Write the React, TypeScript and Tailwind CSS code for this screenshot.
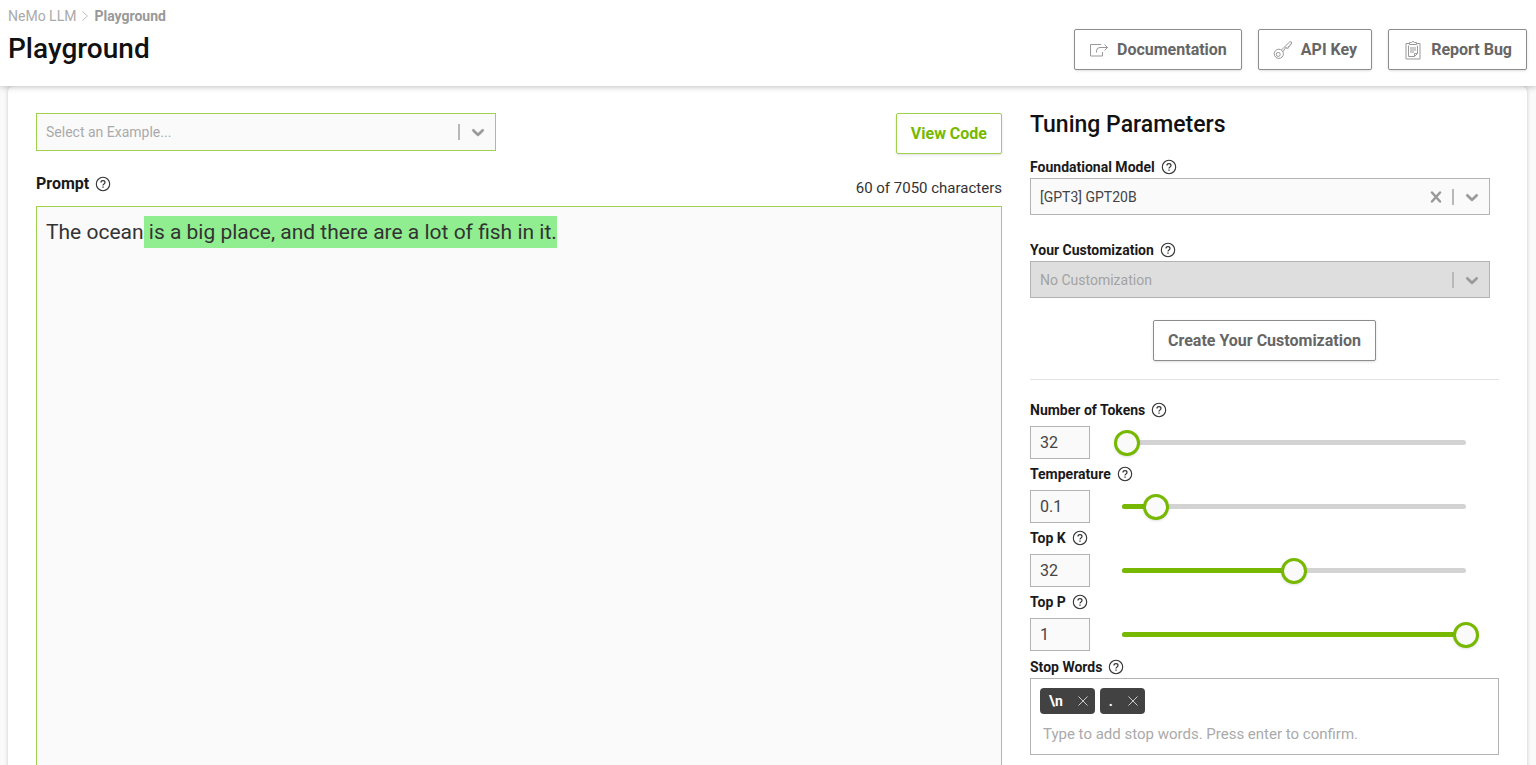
import { useState } from "react"
import type { ReactNode } from "react"

const ShareIcon = () => (
  <svg
    className="h-4 w-5"
    viewBox="0 0 20 16"
    fill="none"
    stroke="currentColor"
    aria-hidden="true"
  >
    <path d="M12 2.500H1.500V14h12v-4" />
    <path d="M7.500 10.500V9q0-3.500 3.500-3.500h8M15.500 2.500l3 3-3 3" />
  </svg>
)

const KeyIcon = () => (
  <svg
    className="h-5 w-5"
    viewBox="0 0 20 20"
    fill="none"
    stroke="currentColor"
    aria-hidden="true"
  >
    <circle cx="5.800" cy="13.800" r="4.600" />
    <circle cx="5.200" cy="14.400" r="2" />
    <path d="M8.200 10.200L16.800 1.800l1.700.2v2l-1.500.5-.2 1.800-1.600.2.2 1.600-2 .2-.3-1.200L9.800 11.800" />
  </svg>
)

const ClipboardIcon = () => (
  <svg
    className="h-5 w-5"
    viewBox="-2 0 20 20"
    fill="none"
    stroke="currentColor"
    aria-hidden="true"
  >
    <path d="M4 3.500H1v15.500h14V3.500h-3" />
    <path d="M4.500 4.500v-2h2q1.500-2.500 3 0h2v2z" />
    <path d="M3.500 5.500v11h6l3-3v-8M9.500 16.500v-3h3" />
    <path d="M5 8h6M5 10h6M5 12h4" />
  </svg>
)

const HelpIcon = () => (
  <svg
    className="h-4 w-4 text-[#333]"
    viewBox="0 0 16 16"
    fill="none"
    stroke="currentColor"
    aria-hidden="true"
  >
    <circle cx="8" cy="8" r="6.700" strokeWidth="1.100" />
    <path
      d="M6 6.500Q6 4.700 8 4.700t2 1.700Q10 7.300 9 7.900 8 8.500 8 9.400"
      strokeWidth="1.200"
    />
    <path d="M8 10.500v1.300" strokeWidth="1.300" />
  </svg>
)

const ChevronIcon = () => (
  <svg
    className="h-5 w-5"
    viewBox="0 0 20 20"
    fill="currentColor"
    stroke="currentColor"
    strokeWidth="0.500"
    aria-hidden="true"
  >
    <path d="M4.516 7.548c0.436-0.446 1.043-0.481 1.576 0l3.908 3.747 3.908-3.747c0.533-0.481 1.141-0.446 1.574 0 0.436 0.445 0.408 1.197 0 1.615-0.406 0.418-4.695 4.502-4.695 4.502-0.217 0.223-0.502 0.335-0.787 0.335s-0.570-0.112-0.789-0.335c0 0-4.287-4.084-4.695-4.502s-0.436-1.170 0-1.615z" />
  </svg>
)

const CrossIcon = () => (
  <svg
    className="h-3 w-3"
    viewBox="0 0 12 12"
    fill="none"
    stroke="currentColor"
    strokeWidth="2.500"
    strokeLinecap="round"
    aria-hidden="true"
  >
    <path d="M2 1.500l8 9M10 1.500l-8 9" />
  </svg>
)

const ThinCrossIcon = () => (
  <svg
    className="h-3 w-3"
    viewBox="0 0 12 12"
    fill="none"
    stroke="currentColor"
    aria-hidden="true"
  >
    <path d="M1.500 1.500l9 9M10.500 1.500l-9 9" />
  </svg>
)

const HeaderButton = ({
  icon,
  children,
}: {
  icon: ReactNode
  children: ReactNode
}) => (
  <button className="flex h-[41px] items-center gap-2 rounded-xs border border-[#8c8c8c] bg-white px-3.5 text-base font-bold text-[#666] shadow">
    <span className="text-[#999]">{icon}</span>
    {children}
  </button>
)

const FieldLabel = ({ id, children }: { id: string; children: string }) => (
  <div className="flex items-center gap-1.5">
    <label htmlFor={id} className="text-sm leading-5 font-bold text-[#1a1a1a]">
      {children}
    </label>
    <HelpIcon />
  </div>
)

interface SelectProps {
  id: string
  option: string
  label?: string
  box: string
  disabled?: boolean
  clearable?: boolean
}

const Select = ({
  id,
  option,
  label,
  box,
  disabled,
  clearable,
}: SelectProps) => (
  <div className="relative w-full max-w-[460px]">
    <select
      id={id}
      aria-label={label}
      disabled={disabled}
      className={`block w-full appearance-none rounded-none border pr-24 pl-[9px] text-sm opacity-100 outline-none ${box}`}
    >
      <option>{option}</option>
    </select>
    <div className="pointer-events-none absolute inset-y-0 right-2 flex items-center gap-2 text-[#999]">
      {clearable && (
        <span className="pr-0.5">
          <CrossIcon />
        </span>
      )}
      <span className="h-4 w-0.5 bg-[#b8b8b8]" />
      <ChevronIcon />
    </div>
  </div>
)

interface SliderFieldProps {
  id: string
  label: string
  initial: number
  max: number
  step: number
}

const SliderField = ({ id, label, initial, max, step }: SliderFieldProps) => {
  const [value, setValue] = useState(initial)

  return (
    <div className="flex flex-col gap-1.5">
      <FieldLabel id={id}>{label}</FieldLabel>
      <div className="flex items-center gap-[19px] pr-5">
        <input
          id={id}
          value={value}
          onChange={(e) => setValue(Number(e.target.value) || 0)}
          className="h-[33px] w-[60px] shrink-0 border border-[#b3b3b3] bg-[#fafafa] px-[9px] text-base text-[#444] outline-none"
        />
        <div className="grid h-[30px] flex-1 items-center">
          <div className="mx-[13px] h-[5px] rounded-full bg-[#d3d3d3] [grid-area:1/1]">
            <div
              className="h-full rounded-full bg-[#76b900]"
              style={{ width: `${(value / max) * 100}%` }}
            />
          </div>
          <input
            type="range"
            aria-label={label}
            min={0}
            max={max}
            step={step}
            value={value}
            onChange={(e) => setValue(Number(e.target.value))}
            className="w-full min-w-0 appearance-none bg-transparent [grid-area:1/1] [&::-webkit-slider-thumb]:h-[26px] [&::-webkit-slider-thumb]:w-[26px] [&::-webkit-slider-thumb]:appearance-none [&::-webkit-slider-thumb]:rounded-full [&::-webkit-slider-thumb]:border-3 [&::-webkit-slider-thumb]:border-[#76b900] [&::-webkit-slider-thumb]:bg-[#fafafa] [&::-webkit-slider-thumb]:shadow"
          />
        </div>
      </div>
    </div>
  )
}

const sliders: SliderFieldProps[] = [
  { id: "tokens", label: "Number of Tokens", initial: 32, max: 2048, step: 1 },
  { id: "temperature", label: "Temperature", initial: 0.1, max: 1, step: 0.1 },
  { id: "top-k", label: "Top K", initial: 32, max: 64, step: 1 },
  { id: "top-p", label: "Top P", initial: 1, max: 1, step: 0.1 },
]

const Tag = ({ children }: { children: string }) => (
  <span className="flex h-[26px] items-center gap-3.5 rounded-sm bg-[#424242] pr-1.5 pl-[9px] text-sm font-bold text-white">
    {children}
    <button aria-label={`Remove ${children}`} className="text-[#ccc]">
      <ThinCrossIcon />
    </button>
  </span>
)

const given = "The ocean"
const generated = " is a big place, and there are a lot of fish in it."

const PromptBox = () => {
  const [text, setText] = useState(given + generated)
  const untouched = text === given + generated

  return (
    <div className="grid min-h-[640px] flex-1 border border-[#9fd14f] bg-[#fafafa] text-[21px] leading-[33px]">
      {/* paints the generated text's background underneath the textarea */}
      <div
        aria-hidden="true"
        className="px-[9px] py-[9px] whitespace-pre-wrap text-transparent [grid-area:1/1]"
      >
        {untouched && (
          <>
            {given}
            <mark className="bg-[#90ee90] py-1 text-transparent">
              {generated}
            </mark>
          </>
        )}
      </div>
      <textarea
        id="prompt"
        value={text}
        onChange={(e) => setText(e.target.value)}
        className="block h-full w-full resize-none bg-transparent px-[9px] py-[9px] text-[#333] outline-none [grid-area:1/1]"
      />
    </div>
  )
}

const Header = () => (
  <header className="relative z-10 flex shrink-0 items-start justify-between bg-white pr-[9px] pb-4 pl-2 shadow-[0_1px_6px_rgba(0,0,0,0.25)]">
    <div className="flex flex-col pt-1.5">
      <nav className="flex items-center gap-1.5 text-sm leading-5 text-[#999]">
        <a href="#" className="text-[#aaa]">
          NeMo LLM
        </a>
        <svg
          className="h-2.5 w-1.5 text-[#bbb]"
          viewBox="0 0 6 10"
          fill="none"
          stroke="currentColor"
          aria-hidden="true"
        >
          <path d="M.5.500L5.500 5l-5 4.500" />
        </svg>
        <span className="font-bold">Playground</span>
      </nav>
      <h1 className="mt-[5px] text-[28px] leading-9 font-medium text-[#111]">
        Playground
      </h1>
    </div>
    <div className="flex gap-4 pt-[29px]">
      <HeaderButton icon={<ShareIcon />}>Documentation</HeaderButton>
      <HeaderButton icon={<KeyIcon />}>API Key</HeaderButton>
      <HeaderButton icon={<ClipboardIcon />}>Report Bug</HeaderButton>
    </div>
  </header>
)

const App = () => {
  return (
    <div className="flex h-screen flex-col overflow-hidden bg-[#fafafa] font-[Roboto,sans-serif]">
      <Header />
      <main className="mr-[9px] ml-2 flex flex-1 gap-7 rounded-t-md bg-white px-7 pt-[27px] shadow-[0_0_4px_rgba(0,0,0,0.2)]">
        <section className="flex min-w-0 flex-1 flex-col">
          <div className="flex items-start justify-between gap-4">
            <Select
              id="example"
              label="Example"
              option="Select an Example..."
              box="h-[38px] border-[#9fd14f] bg-[#fafafa] text-[#aaa]"
            />
            <button className="h-[41px] rounded-xs border border-[#9fd14f] bg-white px-3.5 text-base font-bold text-[#76b900] shadow">
              View Code
            </button>
          </div>
          <div className="mt-5 mb-2 flex items-start justify-between">
            <div className="flex items-center gap-1.5">
              <label
                htmlFor="prompt"
                className="text-base leading-5 font-bold text-[#1a1a1a]"
              >
                Prompt
              </label>
              <HelpIcon />
            </div>
            <span className="pt-1 text-[15px] leading-5 text-[#333]">
              60 of 7050 characters
            </span>
          </div>
          <PromptBox />
        </section>

        <section className="w-[469px] shrink-0">
          <h2 className="-mt-1 text-[23px] leading-8 font-medium text-[#111]">
            Tuning Parameters
          </h2>
          <div className="mt-4 flex flex-col gap-px">
            <FieldLabel id="model">Foundational Model</FieldLabel>
            <Select
              id="model"
              option="[GPT3] GPT20B"
              clearable
              box="h-[37px] border-[#b3b3b3] bg-[#fafafa] text-[#444]"
            />
          </div>
          <div className="mt-[25px] flex flex-col gap-px">
            <FieldLabel id="customization">Your Customization</FieldLabel>
            <Select
              id="customization"
              option="No Customization"
              disabled
              box="h-[37px] border-[#b3b3b3] bg-[#dedede] text-[#a3a3a3]"
            />
          </div>
          <div className="mt-[22px] flex justify-center border-b border-[#e3e3e3] pb-[18px]">
            <button className="h-[41px] rounded-xs border border-[#8c8c8c] bg-white px-3.5 text-base font-bold text-[#666] shadow">
              Create Your Customization
            </button>
          </div>
          <div className="mt-5 flex flex-col gap-[5px]">
            {sliders.map((slider) => (
              <SliderField key={slider.id} {...slider} />
            ))}
          </div>
          <div className="mt-1.5 flex flex-col gap-px">
            <FieldLabel id="stop-words">Stop Words</FieldLabel>
            <div className="flex flex-col gap-2 border border-[#b3b3b3] bg-white px-[9px] pt-[9px] pb-2">
              <div className="flex gap-[5px]">
                <Tag>\n</Tag>
                <Tag>.</Tag>
              </div>
              <input
                id="stop-words"
                placeholder="Type to add stop words. Press enter to confirm."
                className="h-6 w-full px-[3px] text-[15px] outline-none placeholder:text-[#aaa]"
              />
            </div>
          </div>
        </section>
      </main>
    </div>
  )
}

export default App
